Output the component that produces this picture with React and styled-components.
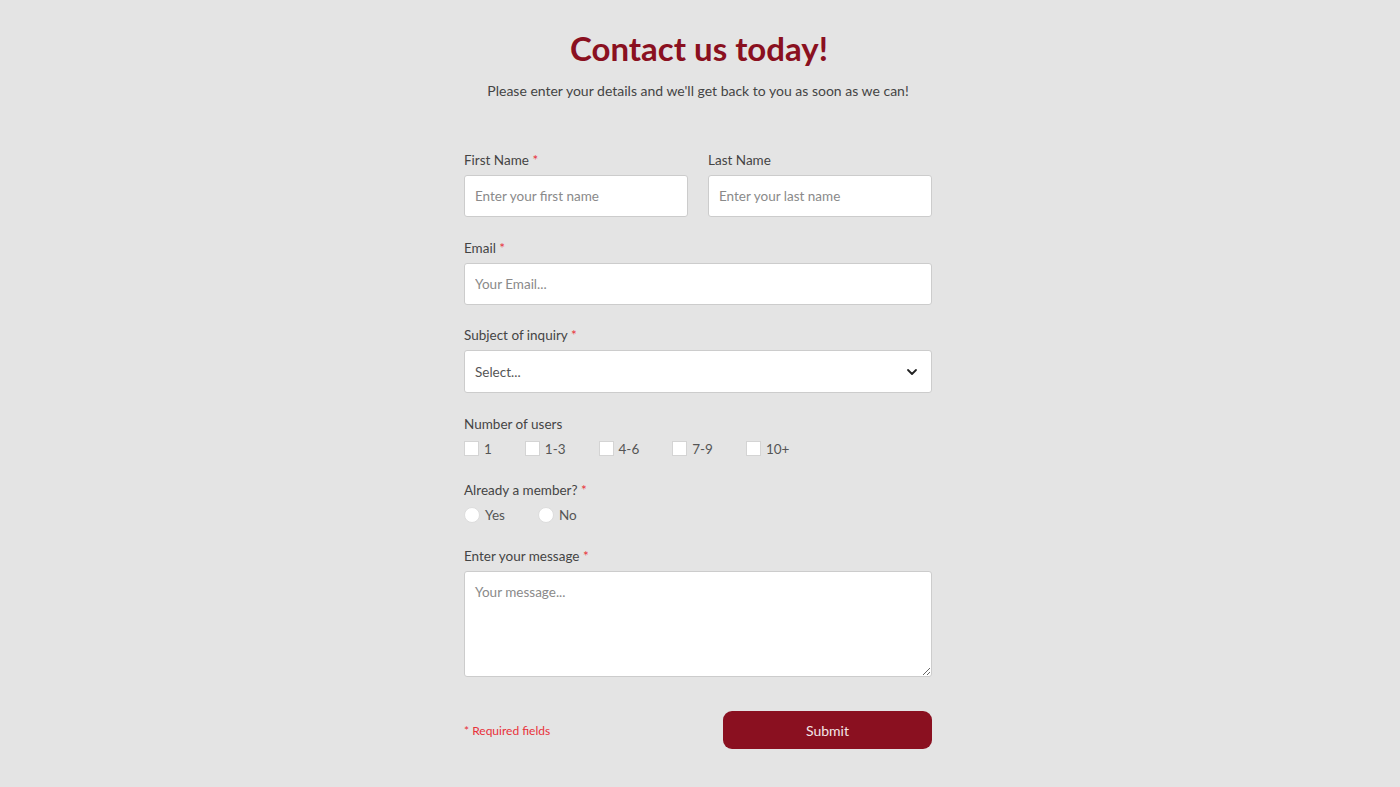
import styled, { createGlobalStyle } from "styled-components";

const GlobalStyle = createGlobalStyle`
  body {
    margin: 0;
    background: #e4e4e4;
    font-family: Lato, "Noto Sans", sans-serif;
    color: #444;
  }
`;

const userCounts = ["1", "1-3", "4-6", "7-9", "10+"];

const App = () => {
  return (
    <Page>
      <GlobalStyle />
      <Title>Contact us today!</Title>
      <Intro>Please enter your details and we'll get back to you as soon as we can!</Intro>
      <Form onSubmit={(e) => e.preventDefault()}>
        <Row>
          <Field>
            <Label>First Name <Star>*</Star></Label>
            <Input placeholder="Enter your first name" />
          </Field>
          <Field>
            <Label>Last Name</Label>
            <Input placeholder="Enter your last name" />
          </Field>
        </Row>
        <Field>
          <Label>Email <Star>*</Star></Label>
          <Input placeholder="Your Email..." />
        </Field>
        <Field>
          <Label>Subject of inquiry <Star>*</Star></Label>
          <SelectBox>
            <span>Select...</span>
            <svg width="12" height="12" viewBox="0 0 12 12">
              <path d="M2 4l4 4 4-4" fill="none" stroke="#222" strokeWidth="1.8" strokeLinecap="round" strokeLinejoin="round" />
            </svg>
          </SelectBox>
        </Field>
        <Field $tight>
          <Label $gap="7px">Number of users</Label>
          <Options>
            {userCounts.map((count) => (
              <Option key={count}>
                <Box />
                {count}
              </Option>
            ))}
          </Options>
        </Field>
        <Field $tight>
          <Label $gap="7px">Already a member? <Star>*</Star></Label>
          <Options>
            <Option>
              <Circle />
              Yes
            </Option>
            <Option>
              <Circle />
              No
            </Option>
          </Options>
        </Field>
        <Field>
          <Label>Enter your message <Star>*</Star></Label>
          <Message placeholder="Your message..." />
        </Field>
        <Footer>
          <Required>* Required fields</Required>
          <Submit type="submit">Submit</Submit>
        </Footer>
      </Form>
    </Page>
  );
};

export default App;

const Page = styled.main`
  display: flex;
  flex-direction: column;
  align-items: center;
  padding: 28px 4px 0 0;
  min-height: 787px;
  box-sizing: border-box;
`;

const Title = styled.h1`
  margin: 0 0 0 2px;
  font-size: 33px;
  line-height: 40px;
  font-weight: 700;
  color: #8a1020;
`;

const Intro = styled.p`
  margin: 14px 0 0;
  font-size: 14px;
  line-height: 18px;
  color: #444;
`;

const Form = styled.form`
  width: 468px;
  margin-top: 51px;
  display: flex;
  flex-direction: column;
`;

const Row = styled.div`
  display: grid;
  grid-template-columns: 1fr 1fr;
  gap: 20px;
`;

const Field = styled.div`
  display: flex;
  flex-direction: column;
  margin-bottom: ${(p) => (p.$tight ? "23px" : "21.5px")};
`;

const Label = styled.label`
  font-size: 13.5px;
  line-height: 18px;
  margin-bottom: ${(p) => p.$gap || "6px"};
  color: #444;
`;

const Star = styled.span`
  color: #e8313a;
`;

const Input = styled.input`
  height: 42px;
  box-sizing: border-box;
  border: 1px solid #ccc;
  border-radius: 3px;
  background: #fff;
  padding: 0 10px;
  font-family: inherit;
  font-size: 13.5px;
  color: #333;
  outline: none;

  &::placeholder {
    color: #8a8a8a;
  }
`;

const SelectBox = styled.div`
  height: 43px;
  box-sizing: border-box;
  border: 1px solid #ccc;
  border-radius: 3px;
  background: #fff;
  padding: 0 13px 0 10px;
  display: flex;
  align-items: center;
  justify-content: space-between;
  font-size: 13.5px;
  color: #555;
`;

const Options = styled.div`
  display: flex;
  align-items: center;
  gap: 33px;
  height: 18px;
`;

const Option = styled.label`
  display: flex;
  align-items: center;
  gap: 5px;
  font-size: 13.5px;
  color: #555;
`;

const Box = styled.span`
  width: 15px;
  height: 15px;
  box-sizing: border-box;
  background: #fff;
  border: 1px solid #d4d4d4;
`;

const Circle = styled.span`
  width: 16px;
  height: 16px;
  box-sizing: border-box;
  border-radius: 50%;
  background: #fff;
  border: 1px solid #ddd;
`;

const Message = styled.textarea`
  height: 106px;
  box-sizing: border-box;
  border: 1px solid #ccc;
  border-radius: 3px;
  background: #fff;
  padding: 12px 10px;
  font-family: inherit;
  font-size: 13.5px;
  resize: vertical;
  outline: none;

  &::placeholder {
    color: #8a8a8a;
  }
`;

const Footer = styled.div`
  display: flex;
  align-items: center;
  justify-content: space-between;
  margin-top: 13px;
`;

const Required = styled.span`
  font-size: 12px;
  color: #e8313a;
`;

const Submit = styled.button`
  width: 209px;
  height: 38px;
  border: none;
  border-radius: 9px;
  background: #8a1020;
  color: #f4e6e8;
  font-family: inherit;
  font-size: 14px;
  cursor: pointer;
`;
